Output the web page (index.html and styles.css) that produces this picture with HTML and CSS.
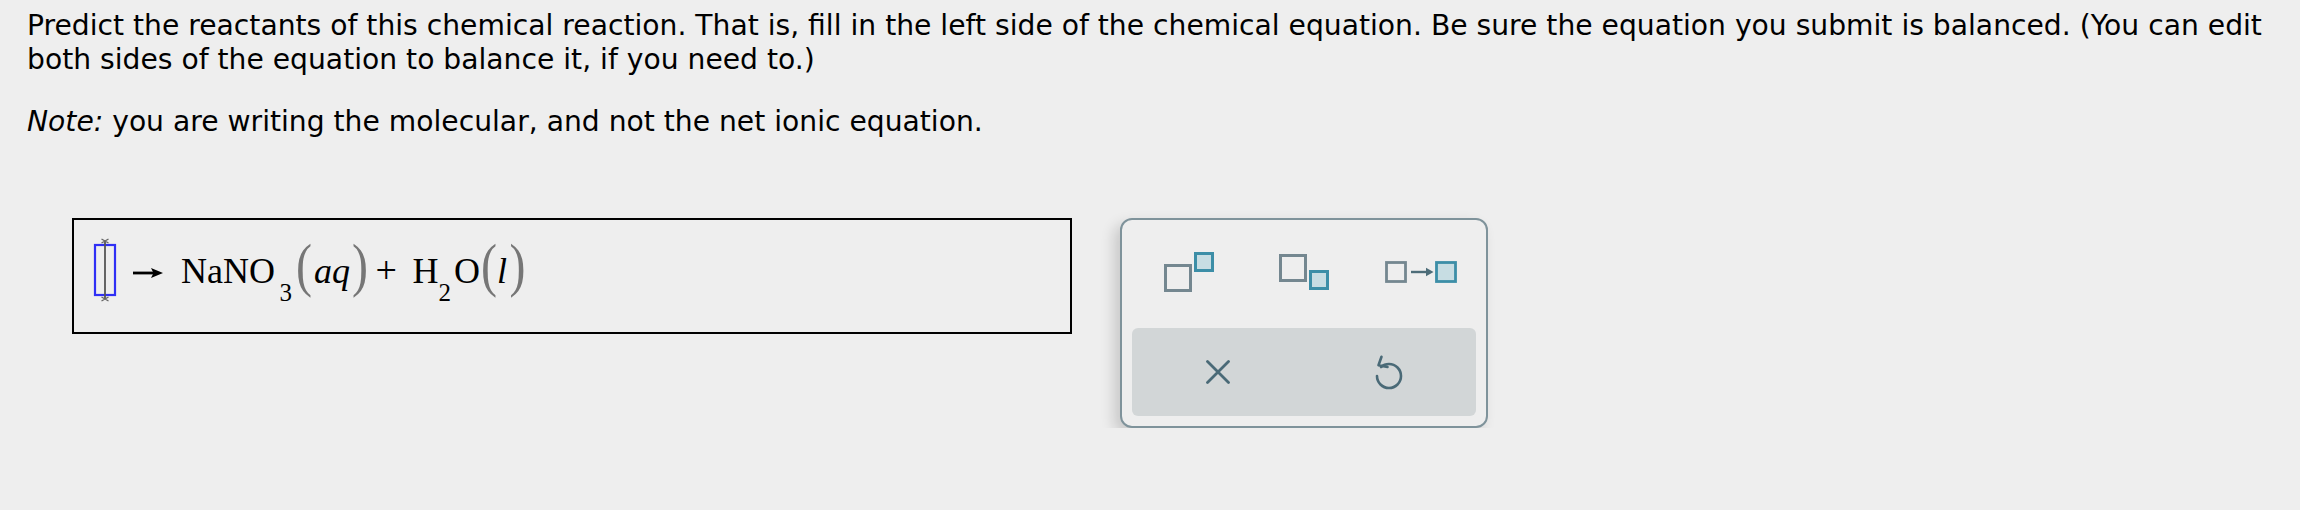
FILE: index.html
```html
<!DOCTYPE html>
<html>
<head>
<meta charset="utf-8">
<title>Predict the reactants</title>
<link rel="stylesheet" href="styles.css">
</head>
<body>
<div class="page">
  <p class="prompt">Predict the reactants of this chemical reaction. That is, fill in the left side of the chemical equation. Be sure the equation you submit is balanced. (You can edit both sides of the equation to balance it, if you need to.)</p>
  <p class="prompt note"><em>Note:</em> you are writing the molecular, and not the net ionic equation.</p>

  <div class="work">
    <div class="eqbox">
      <svg class="cursor" width="26" height="64" viewBox="0 0 26 64">
        <rect x="3" y="7" width="20" height="50" fill="none" stroke="#2f2ff5" stroke-width="2.2"/>
        <line x1="13" y1="3" x2="13" y2="61" stroke="#555" stroke-width="1.8"/>
        <path d="M9.5 1 L16.5 5 M16.5 1 L9.5 5 M9.5 59 L16.5 63 M16.5 59 L9.5 63" stroke="#666" stroke-width="1.3" fill="none"/>
      </svg>
      <svg class="yields" width="32" height="12" viewBox="0 0 32 12">
        <line x1="1" y1="6" x2="23" y2="6" stroke="#000" stroke-width="2.8"/>
        <path d="M19 1 L31 6 L19 11 L21.5 6 Z" fill="#000"/>
      </svg>
      <div class="formula"><span>NaNO</span><sub class="s3">3</sub><span class="paren p1">(</span><i class="va">a</i><i>q</i><span class="paren p2">)</span><span class="plus">+</span><span>H</span><sub class="s2">2</sub><span class="o2">O</span><span class="paren p3">(</span><i class="vl">l</i><span class="paren p4">)</span></div>
    </div>

    <div class="palette">
      <div class="tools">
        <button class="tool" type="button" title="superscript">
          <svg width="50" height="40" viewBox="0 0 50 40">
            <rect x="1.5" y="13.5" width="25" height="25" fill="none" stroke="#748790" stroke-width="3"/>
            <rect x="31.5" y="1.5" width="17" height="17" fill="#c7dde3" stroke="#3c8ea7" stroke-width="3"/>
          </svg>
        </button>
        <button class="tool" type="button" title="subscript">
          <svg width="50" height="36" viewBox="0 0 50 36">
            <rect x="1.5" y="1.5" width="25" height="25" fill="none" stroke="#748790" stroke-width="3"/>
            <rect x="31.5" y="17.5" width="17" height="17" fill="#c7dde3" stroke="#3c8ea7" stroke-width="3"/>
          </svg>
        </button>
        <button class="tool tool-arrow" type="button" title="reaction arrow">
          <svg width="72" height="22" viewBox="0 0 72 22">
            <rect x="1.5" y="1.5" width="19" height="19" fill="none" stroke="#748790" stroke-width="2.8"/>
            <line x1="26" y1="11" x2="43" y2="11" stroke="#4d6c78" stroke-width="2.4"/>
            <path d="M41 6.8 L48.5 11 L41 15.2 Z" fill="#4d6c78"/>
            <rect x="51.5" y="1.5" width="19" height="19" fill="#c7dde3" stroke="#3c8ea7" stroke-width="2.8"/>
          </svg>
        </button>
      </div>
      <div class="actions">
        <button class="action" type="button" title="clear">
          <svg width="24" height="24" viewBox="0 0 24 24">
            <path d="M1.5 1.5 L22.5 22.5 M22.5 1.5 L1.5 22.5" stroke="#4a6a77" stroke-width="2.8" stroke-linecap="round" fill="none"/>
          </svg>
        </button>
        <button class="action" type="button" title="undo">
          <svg width="30" height="36" viewBox="0 0 30 36">
            <path d="M2 22 A12 12 0 1 0 14 10 A12 12 0 0 0 6 13" stroke="#4a6a77" stroke-width="2.6" fill="none" stroke-linecap="round"/>
            <path d="M6.5 2.8 L3.5 11.3 L12.5 13" stroke="#4a6a77" stroke-width="2.6" fill="none" stroke-linecap="round" stroke-linejoin="round"/>
          </svg>
        </button>
      </div>
    </div>
  </div>
</div>
</body>
</html>
```

FILE: styles.css
```css
html, body {
  margin: 0;
  padding: 0;
  background: #eeeeee;
}

body {
  font-family: "DejaVu Sans", Verdana, sans-serif;
  color: #000;
}

.page {
  padding: 8.8px 27px 0 27px;
}

.prompt {
  margin: 0;
  font-size: 28.2px;
  line-height: 34.3px;
}

.note {
  margin-top: 27.7px;
}

.work {
  display: flex;
  align-items: flex-start;
  gap: 48px;
  margin-top: 78.6px;
  margin-left: 45px;
}

.eqbox {
  width: 1000px;
  height: 116px;
  box-sizing: border-box;
  border: 2px solid #000;
  display: flex;
  align-items: flex-start;
  padding: 18px 0 0 18px;
}

.cursor {
  display: block;
  flex: none;
}

.yields {
  display: block;
  flex: none;
  margin: 29px 0 0 14px;
}

.formula {
  margin: 14px 0 0 17px;
  font-family: "Liberation Serif", "Times New Roman", serif;
  font-size: 36px;
  line-height: 36px;
  white-space: nowrap;
}

.formula i {
  font-style: italic;
}

.formula sub {
  font-size: 25px;
  line-height: 0;
  vertical-align: -18px;
}

.s3 {
  margin-left: 4.5px;
}

.o2 {
  margin-left: 3px;
}

.paren {
  display: inline-block;
  font-size: 48px;
  line-height: 0;
  color: #767676;
  transform: scaleY(1.22);
  vertical-align: 2px;
}

.p1 {
  margin: 0 2px 0 4px;
}

.p2 {
  margin-left: 2px;
}

.p3 {
  margin-left: 1px;
}

.p4 {
  margin-left: 2.5px;
}

.plus {
  margin: 0 15.5px 0 7.5px;
  font-size: 38px;
}

.palette {
  width: 368px;
  box-sizing: border-box;
  border: 2px solid #7f939b;
  border-radius: 12px;
  padding: 10px;
  background: #eeeeee;
  box-shadow: -6px 6px 14px rgba(0, 0, 0, 0.16);
  display: flex;
  flex-direction: column;
}

.tools {
  display: grid;
  grid-template-columns: repeat(3, 1fr);
  height: 84px;
  margin-bottom: 14px;
}

.tool,
.action {
  background: none;
  border: 0;
  padding: 0;
  margin: 0;
  display: flex;
  align-items: center;
  justify-content: center;
  cursor: pointer;
}

.tool svg,
.action svg {
  display: block;
}

.tool-arrow svg {
  margin-left: 5px;
}

.actions {
  display: grid;
  grid-template-columns: 1fr 1fr;
  height: 88px;
  background: #d2d6d7;
  border-radius: 6px;
}
```
